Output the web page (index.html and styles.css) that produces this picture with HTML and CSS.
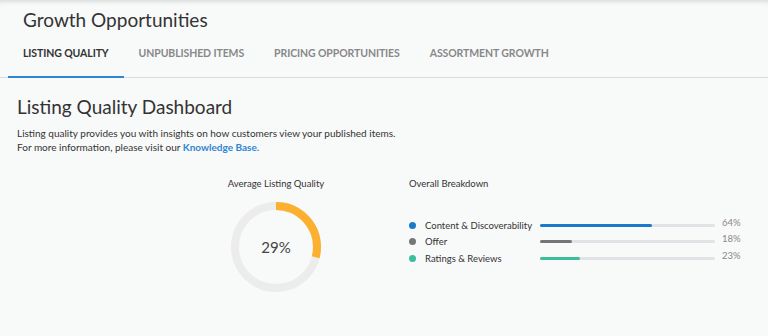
FILE: index.html
```html
<!DOCTYPE html>
<html>
<head>
<meta charset="utf-8">
<link rel="stylesheet" href="styles.css">
</head>
<body>
<div class="page">
  <header class="header">
    <h1 class="title">Growth Opportunities</h1>
    <nav class="tabs">
      <a class="tab active">LISTING QUALITY</a>
      <a class="tab">UNPUBLISHED ITEMS</a>
      <a class="tab">PRICING OPPORTUNITIES</a>
      <a class="tab">ASSORTMENT GROWTH</a>
    </nav>
  </header>
  <main class="content">
    <h2 class="heading">Listing Quality Dashboard</h2>
    <p class="desc">Listing quality provides you with insights on how customers view your published items.<br>For more information, please visit our <a class="link">Knowledge Base.</a></p>
    <div class="panels">
      <section class="avg">
        <div class="label">Average Listing Quality</div>
        <div class="donut">
          <svg width="92" height="92" viewBox="0 0 92 92">
            <circle cx="46" cy="46" r="41" fill="none" stroke="#ececec" stroke-width="8"/>
            <circle cx="46" cy="46" r="41" fill="none" stroke="#fbb030" stroke-width="8" stroke-dasharray="74.7 400" transform="rotate(-90 46 46)"/>
          </svg>
          <span class="donut-val">29%</span>
        </div>
      </section>
      <section class="breakdown">
        <div class="label">Overall Breakdown</div>
        <ul class="rows">
          <li class="row"><span class="dot blue"></span><span class="name">Content &amp; Discoverability</span><span class="track"><span class="fill blue" style="width:64%"></span></span><span class="pct">64%</span></li>
          <li class="row"><span class="dot gray"></span><span class="name">Offer</span><span class="track"><span class="fill gray" style="width:18%"></span></span><span class="pct">18%</span></li>
          <li class="row"><span class="dot teal"></span><span class="name">Ratings &amp; Reviews</span><span class="track"><span class="fill teal" style="width:23%"></span></span><span class="pct">23%</span></li>
        </ul>
      </section>
    </div>
  </main>
</div>
</body>
</html>
```
FILE: styles.css
```css
* { box-sizing: border-box; }
html, body { margin: 0; padding: 0; }
body {
  width: 768px;
  height: 336px;
  overflow: hidden;
  background: #f8f9f9;
  font-family: Lato, "Open Sans", sans-serif;
  color: #333;
}
.page {
  box-shadow: inset 0 5px 4px -3px rgba(0,0,0,0.12);
  height: 336px;
}
.header {
  border-bottom: 1px solid #dcdcdc;
  padding: 0 0 0 8px;
}
.title {
  margin: 0;
  padding: 9px 0 0 15px;
  font-size: 19px;
  font-weight: 400;
  line-height: 22px;
  color: #333;
}
.tabs {
  display: flex;
  margin-top: 14px;
}
.tab {
  display: block;
  padding: 0 15px 17px 15px;
  font-size: 10.5px;
  font-weight: 700;
  line-height: 16px;
  color: #888;
  letter-spacing: -0.1px;
  margin-bottom: -1px;
}
.tab.active {
  color: #333;
  border-bottom: 2px solid #2f86d1;
  padding-bottom: 15px;
}
.content {
  padding: 18px 0 0 17px;
}
.heading {
  margin: 0;
  font-size: 19px;
  font-weight: 400;
  line-height: 22px;
  color: #333;
}
.desc {
  margin: 8px 0 0 0;
  font-size: 10px;
  line-height: 14px;
  color: #333;
}
.link { color: #2f86d1; font-weight: 700; }
.panels {
  display: flex;
  margin-top: 24px;
}
.label {
  font-size: 9.5px;
  line-height: 12px;
  color: #333;
}
.avg {
  width: 352px;
  display: flex;
  flex-direction: column;
  align-items: center;
  padding-left: 166px;
}
.donut {
  position: relative;
  width: 92px;
  height: 92px;
  margin-top: 11px;
}
.donut svg { display: block; }
.donut-val {
  position: absolute;
  inset: 0;
  display: flex;
  align-items: center;
  justify-content: center;
  font-size: 15px;
  color: #444;
}
.breakdown {
  padding-left: 40px;
}
.rows {
  list-style: none;
  margin: 27px 0 0 0;
  padding: 0;
}
.row {
  display: flex;
  align-items: center;
  height: 16.5px;
  font-size: 9.5px;
  color: #333;
}
.dot {
  width: 7px;
  height: 7px;
  border-radius: 50%;
  margin-right: 9px;
  flex: none;
}
.dot.blue, .fill.blue { background: #1b79cc; }
.dot.gray, .fill.gray { background: #74767a; }
.dot.teal, .fill.teal { background: #3cbf99; }
.name { width: 115px; flex: none; }
.track {
  width: 175px;
  height: 3px;
  border-radius: 2px;
  background: #e1e4e7;
  flex: none;
  display: block;
}
.fill { display: block; height: 3px; border-radius: 2px; }
.pct {
  margin-left: 7px;
  color: #888;
  font-size: 9.5px;
  position: relative;
  top: -3px;
}
```
